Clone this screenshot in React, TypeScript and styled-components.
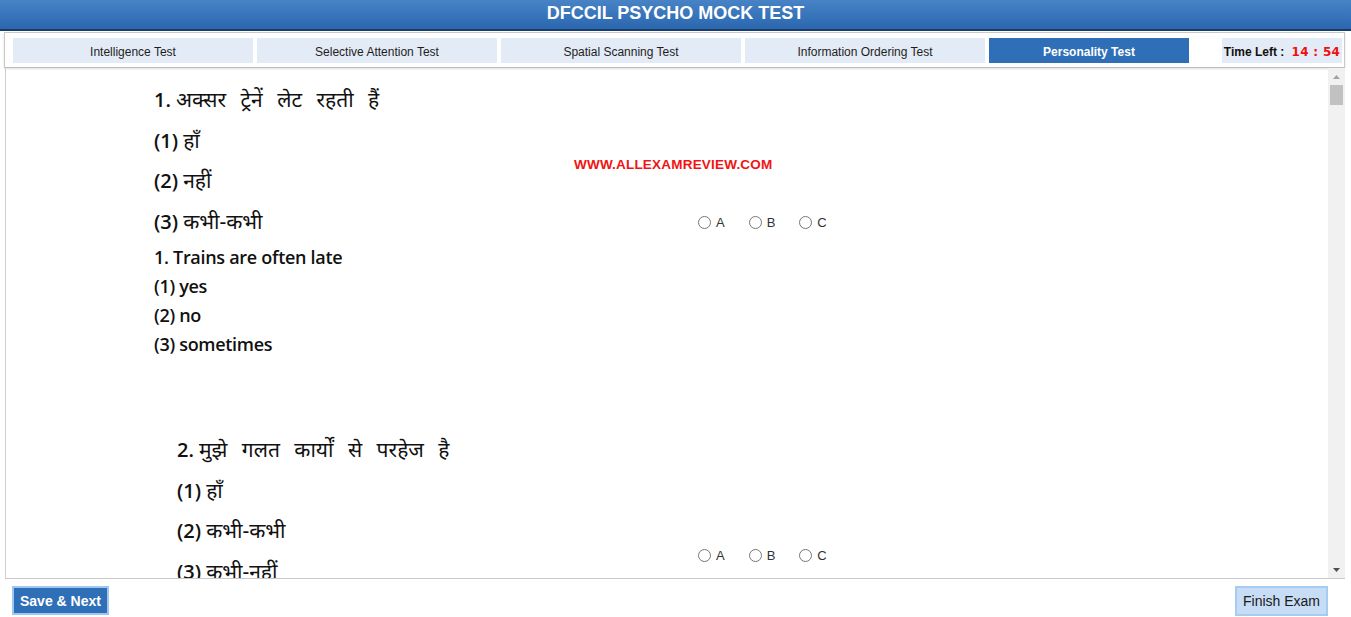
import React from "react";
import styled, { createGlobalStyle } from "styled-components";

const GlobalStyle = createGlobalStyle`
  html, body {
    margin: 0;
    padding: 0;
    background: #ffffff;
    font-family: "Liberation Sans", Arial, sans-serif;
    overflow: hidden;
  }
  * {
    box-sizing: border-box;
  }
`;

type Question = {
  no: number;
  hindi: string;
  hindiOptions: string[];
  english: string;
  englishOptions: string[];
  indent: number;
  padTop: number;
  padBottom: number;
};

const questions: Question[] = [
  {
    no: 1,
    hindi: "अक्सर ट्रेनें लेट रहती हैं",
    hindiOptions: ["हाँ", "नहीं", "कभी-कभी"],
    english: "Trains are often late",
    englishOptions: ["yes", "no", "sometimes"],
    indent: 148,
    padTop: 11,
    padBottom: 17,
  },
  {
    no: 2,
    hindi: "मुझे गलत कार्यों से परहेज है",
    hindiOptions: ["हाँ", "कभी-कभी", "कभी-नहीं"],
    english: "I abstain from wrong deeds",
    englishOptions: ["yes", "sometimes", "never"],
    indent: 171,
    padTop: 53,
    padBottom: 25,
  },
  {
    no: 3,
    hindi: "मुझे नए लोगों से मिलना पसंद है",
    hindiOptions: ["हाँ", "नहीं", "कभी-कभी"],
    english: "I like meeting new people",
    englishOptions: ["yes", "no", "sometimes"],
    indent: 160,
    padTop: 40,
    padBottom: 20,
  },
];

const tabs = [
  "Intelligence Test",
  "Selective Attention Test",
  "Spatial Scanning Test",
  "Information Ordering Test",
  "Personality Test",
];

const App = () => {
  return (
    <>
      <GlobalStyle />
      <Page>
        <Header>DFCCIL PSYCHO MOCK TEST</Header>
        <TabBar>
          {tabs.map((t, i) => (
            <Tab key={t} active={i === tabs.length - 1}>
              {t}
            </Tab>
          ))}
          <Timer>
            Time Left : <Clock>14 : 54</Clock>
          </Timer>
        </TabBar>
        <Content>
          <QuestionList>
            {questions.map((q) => (
              <Row key={q.no}>
                <QuestionCell indent={q.indent} padTop={q.padTop} padBottom={q.padBottom}>
                  <HindiLine spread>
                    <Num>{q.no}.</Num>
                    {q.hindi}
                  </HindiLine>
                  {q.hindiOptions.map((o, i) => (
                    <HindiLine key={o + i}>
                      <Num>({i + 1})</Num>
                      {o}
                    </HindiLine>
                  ))}
                  <EnglishBlock>
                    <EnglishLine>
                      {q.no}. {q.english}
                    </EnglishLine>
                    {q.englishOptions.map((o, i) => (
                      <EnglishLine key={o}>
                        ({i + 1}) {o}
                      </EnglishLine>
                    ))}
                  </EnglishBlock>
                  {q.no === 1 && <Watermark>WWW.ALLEXAMREVIEW.COM</Watermark>}
                </QuestionCell>
                <Options>
                  {["A", "B", "C"].map((l) => (
                    <Option key={l}>
                      <Radio />
                      {l}
                    </Option>
                  ))}
                </Options>
              </Row>
            ))}
          </QuestionList>
          <ScrollRail>
            <ScrollArrow>
              <svg width="7" height="4" viewBox="0 0 7 4">
                <path d="M0 4 L3.5 0 L7 4 Z" fill="#a3a3a3" />
              </svg>
            </ScrollArrow>
            <ScrollThumb />
            <ScrollArrow>
              <svg width="7" height="4" viewBox="0 0 7 4">
                <path d="M0 0 L3.5 4 L7 0 Z" fill="#505050" />
              </svg>
            </ScrollArrow>
          </ScrollRail>
        </Content>
        <Footer>
          <SaveButton>Save &amp; Next</SaveButton>
          <FinishButton>Finish Exam</FinishButton>
        </Footer>
      </Page>
    </>
  );
};

export default App;

const Page = styled.div`
  width: 1351px;
  height: 617px;
  display: flex;
  flex-direction: column;
  overflow: hidden;
`;

const Header = styled.div`
  height: 31px;
  flex-shrink: 0;
  display: flex;
  align-items: center;
  justify-content: center;
  padding-bottom: 3px;
  background: linear-gradient(#4783c5, #2a67b0);
  border-bottom: 2px solid #183c66;
  color: #ffffff;
  font-weight: bold;
  font-size: 18px;
`;

const TabBar = styled.div`
  margin: 1px 6px 0 4px;
  height: 36px;
  flex-shrink: 0;
  display: flex;
  align-items: center;
  gap: 4px;
  padding: 0 2px 0 8px;
  border: 1px solid #c9c9c9;
  border-bottom-color: #bdbdbd;
  box-shadow: 0 1px 2px rgba(0, 0, 0, 0.12);
`;

const Tab = styled.div<{ active?: boolean }>`
  width: ${({ active }) => (active ? "200px" : "240px")};
  height: 25px;
  display: flex;
  align-items: center;
  justify-content: center;
  padding-top: 3px;
  font-size: 12px;
  background: ${({ active }) => (active ? "#2f6fb7" : "#e3ebf6")};
  color: ${({ active }) => (active ? "#ffffff" : "#1e1e1e")};
  font-weight: ${({ active }) => (active ? "bold" : "normal")};
`;

const Timer = styled.div`
  margin-left: auto;
  width: 120px;
  height: 25px;
  display: flex;
  align-items: center;
  justify-content: center;
  gap: 4px;
  padding-top: 3px;
  background: #e3ebf6;
  font-size: 12px;
  font-weight: bold;
  color: #111111;
  white-space: pre;
`;

const Clock = styled.span`
  color: #f01010;
  font-family: "DejaVu Sans", Verdana, sans-serif;
  font-size: 12px;
  letter-spacing: 0.3px;
`;

const Content = styled.div`
  flex: 1;
  min-height: 0;
  margin: 0 6px 0 5px;
  display: flex;
  border-left: 1px solid #cfcfcf;
  border-bottom: 1px solid #c9c9c9;
`;

const QuestionList = styled.div`
  flex: 1;
  min-width: 0;
  overflow: hidden;
`;

const ScrollRail = styled.div`
  width: 17px;
  flex-shrink: 0;
  display: flex;
  flex-direction: column;
  align-items: center;
  background: #f1f1f1;
`;

const ScrollArrow = styled.div`
  width: 17px;
  height: 17px;
  display: flex;
  align-items: center;
  justify-content: center;
  &:last-child {
    margin-top: auto;
  }
`;

const ScrollThumb = styled.div`
  width: 13px;
  height: 20px;
  background: #c1c1c1;
`;

const Row = styled.div`
  display: grid;
  grid-template-columns: 686px 1fr;
  align-items: center;
`;

const QuestionCell = styled.div<{ indent: number; padTop: number; padBottom: number }>`
  position: relative;
  padding: ${({ padTop, padBottom, indent }) => `${padTop}px 0 ${padBottom}px ${indent}px`};
  color: #111111;
`;

const HindiLine = styled.div<{ spread?: boolean }>`
  height: 40.5px;
  line-height: 40.5px;
  white-space: pre;
  font-family: "Noto Sans", "Noto Sans Devanagari", "Lohit Devanagari", "FreeSans", sans-serif;
  font-size: 21px;
  word-spacing: ${({ spread }) => (spread ? "9px" : "0")};
`;

const Num = styled.span`
  font-family: "Open Sans", "Noto Sans", sans-serif;
  font-size: 20px;
  font-weight: 600;
  word-spacing: 0;
  margin-right: 5px;
`;

const EnglishBlock = styled.div`
  padding-top: 2px;
`;

const EnglishLine = styled.div`
  height: 29px;
  line-height: 29px;
  white-space: pre;
  font-family: "Open Sans", "Noto Sans", sans-serif;
  font-weight: 600;
  font-size: 18px;
  letter-spacing: -0.3px;
`;

const Watermark = styled.div`
  position: absolute;
  left: 568px;
  top: 89px;
  color: #f01414;
  font-weight: bold;
  font-size: 13.5px;
  letter-spacing: 0.2px;
  white-space: nowrap;
`;

const Options = styled.div`
  display: flex;
  align-items: center;
  padding-left: 6px;
  gap: 24px;
`;

const Option = styled.label`
  display: flex;
  align-items: center;
  gap: 5px;
  font-size: 13px;
  color: #333333;
`;

const Radio = styled.span`
  width: 13px;
  height: 13px;
  border-radius: 50%;
  border: 1px solid #767676;
  background: #ffffff;
`;

const Footer = styled.div`
  height: 38px;
  flex-shrink: 0;
  display: flex;
  align-items: center;
  justify-content: space-between;
  padding: 5px 23px 0 12px;
`;

const SaveButton = styled.button`
  height: 29px;
  padding: 0 6px;
  border: 2px solid #9dc7ef;
  background: #2f6fb7;
  color: #ffffff;
  font-family: "Liberation Sans", Arial, sans-serif;
  font-weight: bold;
  font-size: 14px;
`;

const FinishButton = styled.button`
  height: 30px;
  padding: 0 6px;
  border: 2px solid #a5cdf1;
  background: #c6ddf5;
  color: #1a1a1a;
  font-family: "Liberation Sans", Arial, sans-serif;
  font-size: 14px;
`;
